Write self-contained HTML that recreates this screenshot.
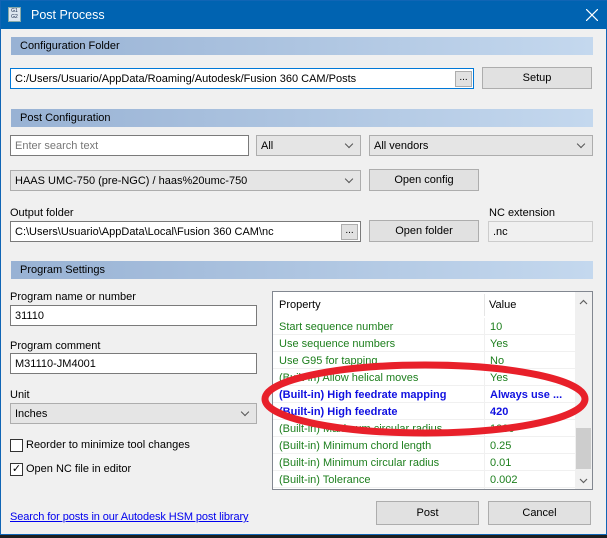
<!DOCTYPE html>
<html><head><style>
*{box-sizing:border-box;margin:0;padding:0}
body{width:607px;height:538px;background:#1e1e1e;font-family:"Liberation Sans",sans-serif;font-size:11px;color:#000;position:relative;overflow:hidden}
.win{position:absolute;left:0;top:0;width:607px;height:535px;background:#f0f0f0;border:1px solid #1065b5}
.a{position:absolute;white-space:nowrap}
.tb{position:absolute;left:0;top:0;width:607px;height:28px;background:#0063b1;color:#fff}
.hd{position:absolute;left:10px;width:582px;height:18px;background:linear-gradient(90deg,#98b2d4,#c4d8ee);padding-left:9px;line-height:19px}
.in{position:absolute;background:#fff;border:1px solid #7a7a7a;height:21px;line-height:20px;padding-left:4px;white-space:nowrap;overflow:hidden}
.bt{position:absolute;background:#e1e1e1;border:1px solid #adadad;height:22px;line-height:21px;text-align:center}
.cb{position:absolute;background:#e5e5e5;border:1px solid #adadad;height:21px;line-height:20px;padding-left:4px;white-space:nowrap}
.cb:after{content:"";position:absolute;right:8px;top:5px;width:5px;height:5px;border-right:1px solid #555;border-bottom:1px solid #555;transform:rotate(45deg)}
.row{position:absolute;left:0;width:302px;height:17px;line-height:18px;border-bottom:1px solid #f0f0f0;color:#1d7f1d}
.row span{position:absolute;left:6px}.row b{position:absolute;left:217px}
.bl{color:#1010e0;font-weight:bold}
.lb{position:absolute;white-space:nowrap}
</style></head><body>
<div class="win">
<div class="tb">
<div class="a" style="left:7px;top:6px;width:13px;height:15px;background:#dde6f0;border:1px solid #8aa;font-size:5px;color:#124;line-height:6px;text-align:center">G1<br>G2</div>
<div class="a" style="left:30px;top:7px;font-size:12.5px">Post Process</div>
<svg class="a" style="left:585px;top:8px" width="12" height="12"><path d="M0 0L12 12M12 0L0 12" stroke="#fff" stroke-width="1.2"/></svg>
</div>
<div class="hd" style="top:36px">Configuration Folder</div>
<div class="in" style="left:9px;top:67px;width:464px;border-color:#0078d7">C:/Users/Usuario/AppData/Roaming/Autodesk/Fusion 360 CAM/Posts</div>
<div class="bt" style="left:454px;top:70px;width:17px;height:16px;line-height:12px;font-size:10px">...</div>
<div class="bt" style="left:481px;top:66px;width:110px">Setup</div>

<div class="hd" style="top:108px">Post Configuration</div>
<div class="in" style="left:9px;top:134px;width:239px;color:#777">Enter search text</div>
<div class="cb" style="left:255px;top:134px;width:105px">All</div>
<div class="cb" style="left:368px;top:134px;width:224px">All vendors</div>
<div class="cb" style="left:9px;top:169px;width:351px">HAAS UMC-750 (pre-NGC) / haas%20umc-750</div>
<div class="bt" style="left:368px;top:168px;width:110px">Open config</div>
<div class="a" style="left:9px;top:206px">Output folder</div>
<div class="a" style="left:488px;top:206px">NC extension</div>
<div class="in" style="left:9px;top:220px;width:351px">C:\Users\Usuario\AppData\Local\Fusion 360 CAM\nc</div>
<div class="bt" style="left:340px;top:223px;width:17px;height:16px;line-height:12px;font-size:10px">...</div>
<div class="bt" style="left:368px;top:219px;width:110px">Open folder</div>
<div class="in" style="left:487px;top:220px;width:105px;background:#f0f0f0;border-color:#ccc">.nc</div>

<div class="hd" style="top:260px">Program Settings</div>
<div class="a" style="left:9px;top:290px">Program name or number</div>
<div class="in" style="left:9px;top:304px;width:247px">31110</div>
<div class="a" style="left:9px;top:339px">Program comment</div>
<div class="in" style="left:9px;top:352px;width:247px">M31110-JM4001</div>
<div class="a" style="left:9px;top:388px">Unit</div>
<div class="cb" style="left:9px;top:402px;width:247px">Inches</div>
<div class="a" style="left:9px;top:438px;width:13px;height:13px;border:1px solid #333;background:#fff"></div>
<div class="a" style="left:25px;top:438px">Reorder to minimize tool changes</div>
<div class="a" style="left:9px;top:462px;width:13px;height:13px;border:1px solid #333;background:#fff;font-size:11px;line-height:11px;text-align:center">✓</div>
<div class="a" style="left:25px;top:462px">Open NC file in editor</div>
<div class="a" style="left:9px;top:510px;color:#0000ee;text-decoration:underline;letter-spacing:-0.1px">Search for posts in our Autodesk HSM post library</div>

<div class="a" style="left:271px;top:290px;width:321px;height:199px;background:#fff;border:1px solid #828790">
<div class="a" style="left:0;top:0;width:302px;height:26px;line-height:27px"><span class="a" style="left:6px">Property</span><span class="a" style="left:216px">Value</span><div class="a" style="left:211px;top:2px;width:1px;height:22px;background:#e5e5e5"></div></div>
<div class="row" style="top:26px"><span>Start sequence number</span><b style="font-weight:normal">10</b></div>
<div class="row" style="top:43px"><span>Use sequence numbers</span><b style="font-weight:normal">Yes</b></div>
<div class="row" style="top:60px"><span>Use G95 for tapping</span><b style="font-weight:normal">No</b></div>
<div class="row" style="top:77px"><span>(Built-in) Allow helical moves</span><b style="font-weight:normal">Yes</b></div>
<div class="row bl" style="top:94px"><span>(Built-in) High feedrate mapping</span><b>Always use ...</b></div>
<div class="row bl" style="top:111px"><span>(Built-in) High feedrate</span><b>420</b></div>
<div class="row" style="top:128px"><span>(Built-in) Maximum circular radius</span><b style="font-weight:normal">1000</b></div>
<div class="row" style="top:145px"><span>(Built-in) Minimum chord length</span><b style="font-weight:normal">0.25</b></div>
<div class="row" style="top:162px"><span>(Built-in) Minimum circular radius</span><b style="font-weight:normal">0.01</b></div>
<div class="row" style="top:179px"><span>(Built-in) Tolerance</span><b style="font-weight:normal">0.002</b></div>
<div class="a" style="left:211px;top:26px;width:1px;height:171px;background:#f0f0f0"></div>
<div class="a" style="left:302px;top:0;width:17px;height:197px;background:#f0f0f0"></div>
<svg class="a" style="left:306px;top:7px" width="9" height="6"><path d="M1 5L4.5 1.5L8 5" stroke="#606060" fill="none" stroke-width="1.2"/></svg>
<svg class="a" style="left:306px;top:186px" width="9" height="6"><path d="M1 1L4.5 4.5L8 1" stroke="#606060" fill="none" stroke-width="1.2"/></svg>
<div class="a" style="left:303px;top:136px;width:15px;height:41px;background:#cdcdcd"></div>
</div>

<div class="bt" style="left:375px;top:500px;width:103px;height:24px;line-height:23px">Post</div>
<div class="bt" style="left:487px;top:500px;width:103px;height:24px;line-height:23px">Cancel</div>

<svg class="a" style="left:0;top:0" width="607" height="535"><ellipse cx="424" cy="398" rx="160" ry="34" fill="none" stroke="#e8202a" stroke-width="7"/></svg>
</div>
</body></html>
